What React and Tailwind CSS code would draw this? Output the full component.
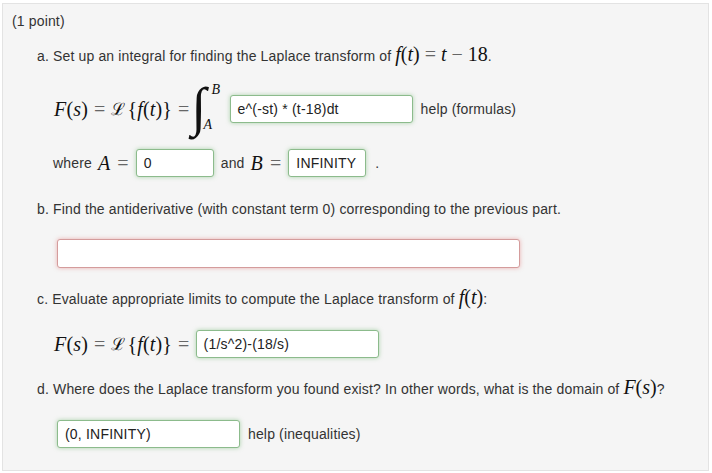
const ok = 'rounded-[3px] border border-[#8cbb8c] bg-white shadow-[0_0_4px_rgba(110,180,110,0.55)]';
const bad = 'rounded-[3px] border border-[#d49c9c] bg-white shadow-[0_0_4px_rgba(225,110,110,0.5)]';
const serif = "[font-family:'Liberation_Serif',serif]";

function Field({ w, h = 'h-[28px]', value, tone = ok }) {
  return (
    <div className={`${tone} ${w} ${h} flex items-center px-[7px] text-[14px] tracking-[0.2px] text-[#222]`}>
      {value}
    </div>
  );
}

function I({ children }) {
  return <span className="italic">{children}</span>;
}

function Eq({ className = 'mx-[5px]' }) {
  return <span className={`${className} text-[#666]`}>=</span>;
}

// inline math inside a sentence, kept out of the line box height
function M({ children }) {
  return (
    <span className={`ml-[4px] text-[20px] leading-[0] tracking-normal text-[#111] ${serif}`}>
      {children}
    </span>
  );
}

// F(s) = L{f(t)} =
function Transform() {
  return (
    <span className={`flex items-center text-[20px] text-[#111] ${serif}`}>
      <I>F</I>(<I>s</I>)
      <Eq className="mx-[6px]" />
      <span className="[font-family:'DejaVu_Serif',serif] text-[17px]">ℒ</span>
      <span className="ml-[2px]">{'{'}</span>
      <I>f</I>(<I>t</I>)
      <span>{'}'}</span>
      <Eq className="mx-[6px]" />
    </span>
  );
}

export default function App() {
  return (
    <div className="bg-white px-[2px] pt-[3px] [font-family:'Liberation_Sans',Arial,sans-serif] text-[#333]">
      <div className="h-[468px] w-[707px] border border-[#e3e3e3] bg-[#f5f5f5] pl-[9px] pt-[7px] text-[14px] leading-[20px] tracking-[0.15px]">
        <div>(1 point)</div>

        {/* part a */}
        <div className="mt-[15px] pl-[25px]">
          a. Set up an integral for finding the Laplace transform of
          <M>
            <I>f</I>(<I>t</I>)
            <Eq className="mx-[5px]" />
            <I>t</I>
            <span className="mx-[5px] text-[#666]">−</span>
            18
          </M>
          .
        </div>

        <div className="mt-[20px] flex h-[46px] items-center pl-[42px]">
          <Transform />
          <div className="relative h-[46px] w-[28px]">
            <span className={`absolute -top-[9px] -left-[4px] text-[54px] leading-[60px] text-[#111] ${serif}`}>∫</span>
            <span className={`absolute -top-[3px] left-[16px] text-[14px] italic leading-[14px] text-[#111] ${serif}`}>B</span>
            <span className={`absolute bottom-[0px] left-[8px] text-[14px] italic leading-[14px] text-[#111] ${serif}`}>A</span>
          </div>
          <div className="ml-[6px]">
            <Field w="w-[183px]" value="e^(-st) * (t-18)dt" />
          </div>
          <span className="ml-[8px]">help (formulas)</span>
        </div>

        <div className="mt-[17px] flex h-[28px] items-center pl-[41px]">
          <span>where</span>
          <span className={`ml-[6px] text-[20px] italic text-[#111] ${serif}`}>A</span>
          <span className={`mx-[7px] text-[20px] text-[#666] ${serif}`}>=</span>
          <Field w="w-[78px]" value="0" />
          <span className="ml-[7px]">and</span>
          <span className={`ml-[6px] text-[20px] italic text-[#111] ${serif}`}>B</span>
          <span className={`mx-[7px] text-[20px] text-[#666] ${serif}`}>=</span>
          <Field w="w-[78px]" value="INFINITY" />
          <span className="ml-[9px]">.</span>
        </div>

        {/* part b */}
        <div className="mt-[22px] pl-[25px]">
          b. Find the antiderivative (with constant term 0) corresponding to the previous part.
        </div>
        <div className="mt-[20px] pl-[45px]">
          <Field w="w-[463px]" h="h-[29px]" value="" tone={bad} />
        </div>

        {/* part c */}
        <div className="mt-[21px] pl-[25px]">
          c. Evaluate appropriate limits to compute the Laplace transform of
          <M>
            <I>f</I>(<I>t</I>)
          </M>
          :
        </div>
        <div className="mt-[21px] flex h-[28px] items-center pl-[42px]">
          <Transform />
          <Field w="w-[183px]" value="(1/s^2)-(18/s)" />
        </div>

        {/* part d */}
        <div className="mt-[21px] pl-[25px]">
          d. Where does the Laplace transform you found exist? In other words, what is the domain of
          <M>
            <I>F</I>(<I>s</I>)
          </M>
          ?
        </div>
        <div className="mt-[21px] flex items-center pl-[45px]">
          <Field w="w-[183px]" value="(0, INFINITY)" />
          <span className="ml-[8px]">help (inequalities)</span>
        </div>
      </div>
    </div>
  );
}
